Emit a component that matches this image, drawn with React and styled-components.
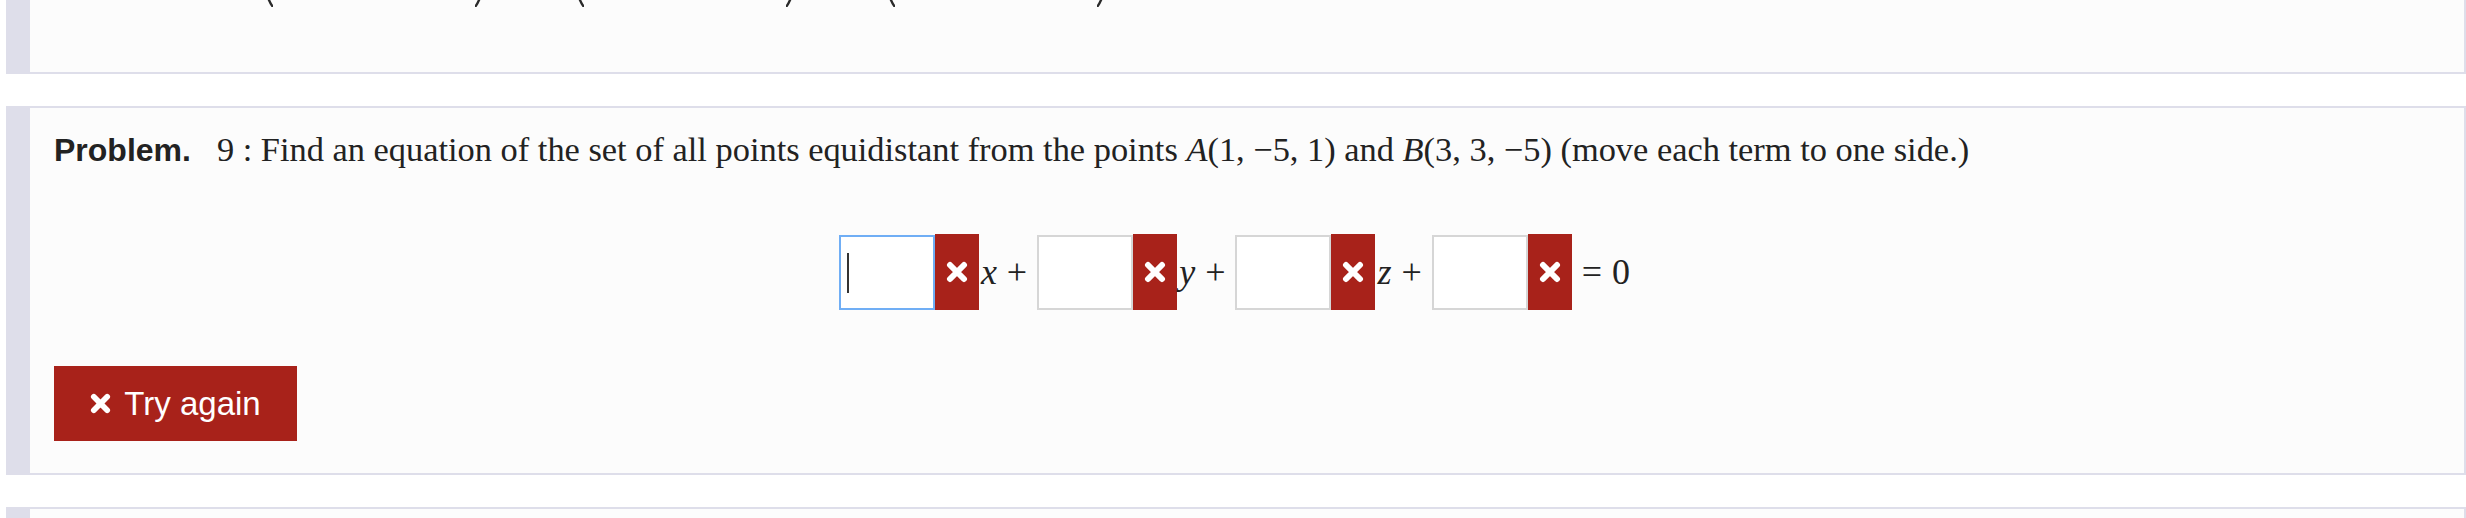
import styled, { createGlobalStyle } from "styled-components"

const GlobalStyle = createGlobalStyle`
  html, body {
    margin: 0;
    padding: 0;
    background: #ffffff;
  }
  body {
    overflow: hidden;
  }
`

const Page = styled.div`
  height: 518px;
  overflow: hidden;
  padding-left: 6px;
  display: flex;
  flex-direction: column;
  gap: 32px;
`

const Card = styled.section`
  flex-shrink: 0;
  background: #fcfcfc;
  border: 2px solid #dedeea;
  border-left: 24px solid #dedeea;
  padding: ${(p) => p.$pad || "18px 24px 32px"};
  margin-top: ${(p) => p.$offset || 0};
  min-height: ${(p) => p.$minHeight || "auto"};
`

const ParenRow = styled.div`
  display: flex;
  gap: 69px;
  margin-left: 199px;
  height: 120px;
`

const ParenGroup = styled.div`
  display: flex;
  justify-content: space-between;
  width: 242px;
`

const ProblemLine = styled.div`
  line-height: 46px;
  white-space: nowrap;
  color: #222;
`

const Label = styled.span`
  font-family: "Liberation Sans", Arial, sans-serif;
  font-weight: 700;
  font-size: 32px;
  margin-right: 26px;
`

const MathText = styled.span`
  font-family: "Liberation Serif", "Times New Roman", serif;
  font-size: 34.4px;
`

const Var = styled.i`
  font-family: "Liberation Serif", "Times New Roman", serif;
  font-style: italic;
`

const EqRow = styled.div`
  margin-top: 55px;
  display: flex;
  justify-content: center;
  align-items: center;
  padding-right: 25px;
  height: 76px;
  font-family: "Liberation Serif", "Times New Roman", serif;
  font-size: 36px;
  color: #222;
`

const AnswerBox = styled.div`
  position: relative;
  box-sizing: border-box;
  width: 96px;
  height: 75px;
  background: #fff;
  border: 2px solid ${(p) => (p.$focused ? "#70aef5" : "#d6d6d6")};
`

const Caret = styled.span`
  position: absolute;
  left: 6px;
  top: 16px;
  width: 2px;
  height: 40px;
  background: #333;
`

const MarkButton = styled.div`
  width: 44px;
  height: 76px;
  background: #a8221a;
  display: flex;
  align-items: center;
  justify-content: center;
`

const Sym = styled.span`
  font-style: ${(p) => (p.$italic ? "italic" : "normal")};
  margin: ${(p) => p.$margin || "0"};
  line-height: 1;
`

const TryButton = styled.button`
  margin-top: 56px;
  width: 243px;
  height: 75px;
  border: none;
  background: #a8221a;
  color: #fff;
  font-family: "Liberation Sans", Arial, sans-serif;
  font-size: 33px;
  display: flex;
  align-items: center;
  justify-content: center;
  gap: 13px;
  padding: 0;
`

const Paren = ({ side }) => (
  <svg width="20" height="120" viewBox="0 0 20 120">
    <path
      d={side === "left" ? "M20 0 C4 20 4 100 20 120" : "M0 0 C16 20 16 100 0 120"}
      fill="none"
      stroke="#2a2a2a"
      strokeWidth="2.4"
    />
  </svg>
)

const Cross = ({ size = 22 }) => (
  <svg width={size} height={size} viewBox="0 0 22 22">
    <path d="M4 4 L18 18 M18 4 L4 18" stroke="#fff" strokeWidth="6" strokeLinecap="round" />
  </svg>
)

const Blank = ({ focused, variable, last }) => (
  <>
    <AnswerBox $focused={focused}>{focused && <Caret />}</AnswerBox>
    <MarkButton>
      <Cross />
    </MarkButton>
    {last ? (
      <>
        <Sym $margin="0 10px 0 10px">=</Sym>
        <Sym>0</Sym>
      </>
    ) : (
      <>
        <Sym $italic $margin="0 0 0 2px">{variable}</Sym>
        <Sym $margin="0 10px">+</Sym>
      </>
    )}
  </>
)

export default function App() {
  return (
    <>
      <GlobalStyle />
      <Page>
        <Card $offset="-139px" $pad="24px 24px 65px">
          <ParenRow>
            {[0, 1, 2].map((i) => (
              <ParenGroup key={i}>
                <Paren side="left" />
                <Paren side="right" />
              </ParenGroup>
            ))}
          </ParenRow>
        </Card>

        <Card>
          <ProblemLine>
            <Label>Problem.</Label>
            <MathText>
              9 : Find an equation of the set of all points equidistant from the points{" "}
              <Var>A</Var>(1, −5, 1) and <Var>B</Var>(3, 3, −5) (move each term to one side.)
            </MathText>
          </ProblemLine>

          <EqRow>
            <Blank focused variable="x" />
            <Blank variable="y" />
            <Blank variable="z" />
            <Blank last />
          </EqRow>

          <TryButton>
            <Cross size={21} />
            Try again
          </TryButton>
        </Card>

        <Card $minHeight="200px" />
      </Page>
    </>
  )
}
